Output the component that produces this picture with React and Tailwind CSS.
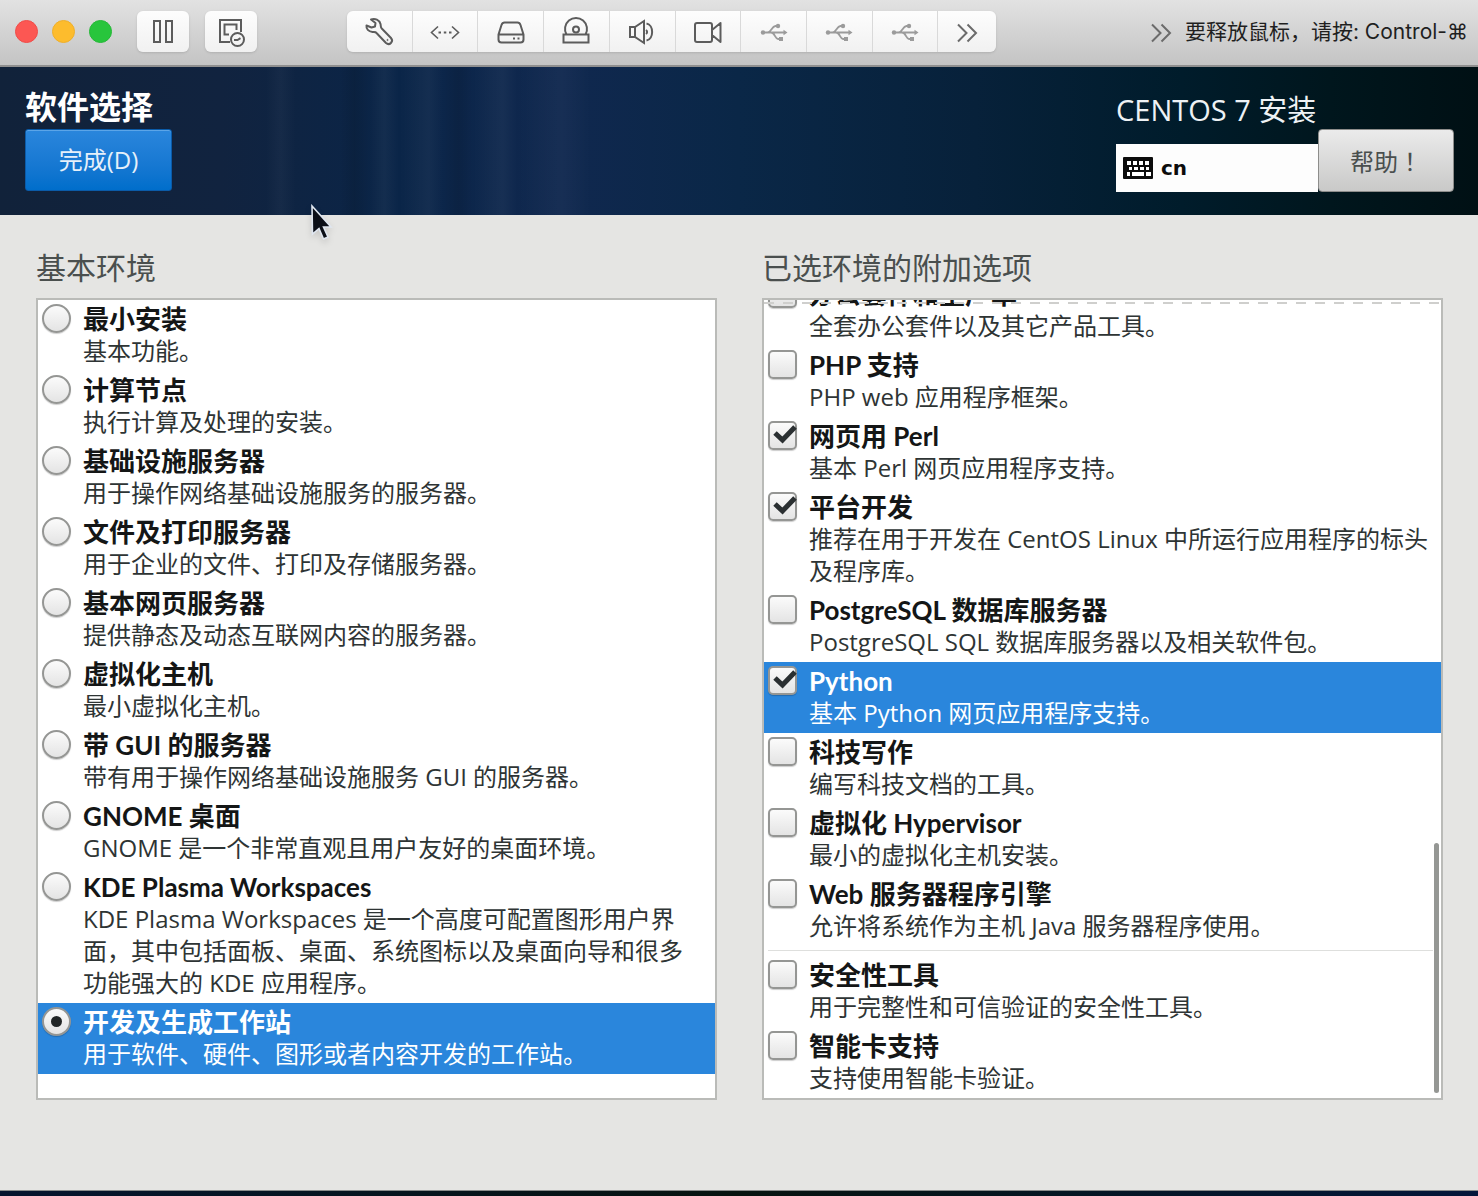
import React, { useState } from 'react';

const ENVIRONMENTS = [
    { id: 'minimal', title: '最小安装', desc: '基本功能。' },
    { id: 'compute', title: '计算节点', desc: '执行计算及处理的安装。' },
    { id: 'infra', title: '基础设施服务器', desc: '用于操作网络基础设施服务的服务器。' },
    { id: 'fileprint', title: '文件及打印服务器', desc: '用于企业的文件、打印及存储服务器。' },
    { id: 'web', title: '基本网页服务器', desc: '提供静态及动态互联网内容的服务器。' },
    { id: 'virt', title: '虚拟化主机', desc: '最小虚拟化主机。' },
    { id: 'gui', title: '带 GUI 的服务器', desc: '带有用于操作网络基础设施服务 GUI 的服务器。' },
    { id: 'gnome', title: 'GNOME 桌面', desc: 'GNOME 是一个非常直观且用户友好的桌面环境。' },
    {
        id: 'kde',
        title: 'KDE Plasma Workspaces',
        desc: 'KDE Plasma Workspaces 是一个高度可配置图形用户界面，其中包括面板、桌面、系统图标以及桌面向导和很多功能强大的 KDE 应用程序。',
    },
    { id: 'dev', title: '开发及生成工作站', desc: '用于软件、硬件、图形或者内容开发的工作站。' },
];

const ADDONS = [
    { id: 'office', title: '办公套件和生产率', desc: '全套办公套件以及其它产品工具。' },
    { id: 'php', title: 'PHP 支持', desc: 'PHP web 应用程序框架。' },
    { id: 'perl', title: '网页用 Perl', desc: '基本 Perl 网页应用程序支持。' },
    { id: 'platform', title: '平台开发', desc: '推荐在用于开发在 CentOS Linux 中所运行应用程序的标头及程序库。' },
    { id: 'postgres', title: 'PostgreSQL 数据库服务器', desc: 'PostgreSQL SQL 数据库服务器以及相关软件包。' },
    { id: 'python', title: 'Python', desc: '基本 Python 网页应用程序支持。' },
    { id: 'tex', title: '科技写作', desc: '编写科技文档的工具。' },
    { id: 'hypervisor', title: '虚拟化 Hypervisor', desc: '最小的虚拟化主机安装。' },
    { id: 'servlet', title: 'Web 服务器程序引擎', desc: '允许将系统作为主机 Java 服务器程序使用。' },
];

const COMMON_ADDONS = [
    { id: 'security', title: '安全性工具', desc: '用于完整性和可信验证的安全性工具。' },
    { id: 'smartcard', title: '智能卡支持', desc: '支持使用智能卡验证。' },
];

const Icon = ({ children, className = 'text-[#5c5c5c]' }) => (
    <svg
        viewBox="0 0 32 32"
        className={`w-8 h-8 ${className}`}
        fill="none"
        stroke="currentColor"
        strokeWidth="2"
        aria-hidden="true"
    >
        {children}
    </svg>
);

const PauseIcon = () => (
    <Icon>
        <path d="M7 5h6v21H7zM19 5h6v21h-6z" />
    </Icon>
);

const SnapshotIcon = () => (
    <Icon>
        <path d="M15 26H5V4h21v12" />
        <path d="M14 18.500H9.500V8.500h12V14" />
        <circle cx="22.500" cy="23.500" r="6.500" />
        <path d="M19 24h3.500l3-1.800" />
    </Icon>
);

const WrenchIcon = () => (
    <Icon>
        <path
            strokeLinejoin="round"
            d="M8 3.500c4-1.500 8.500.5 9.500 4.500.4 1.700 0 3 1 4.200l9.500 9.800c3 3.500-1.500 8-5 5L13.500 17c-1-1.200-2.500-.7-4-1C5.500 15.500 3 13 3.500 9.500L8.500 11.500 12 10.500l.5-3.500z"
        />
        <circle cx="24.500" cy="24" r=".6" strokeWidth="1" />
    </Icon>
);

const NetworkIcon = () => (
    <Icon>
        <path d="M9 10.500L2.500 16.500 9 22.500M23 10.500l6.500 6-6.500 6" strokeWidth="1.6" />
        <path d="M9.500 16.500h2.500M14.800 16.500h2.500M20 16.500h2.500" />
    </Icon>
);

const DiskIcon = () => (
    <Icon>
        <path
            strokeLinejoin="round"
            d="M9.500 6.500h13c1.700 0 2.500 1 3 2.500l3 9.500v5c0 2-1 3-3 3h-19c-2 0-3-1-3-3v-5l3-9.500c.5-1.500 1.300-2.500 3-2.500zM3.500 18.500h25"
        />
        <path d="M18 22.500h2M22.500 22.500h2" />
    </Icon>
);

const OpticalIcon = () => (
    <Icon>
        <path d="M6.500 18.500a11 11 0 1 1 19 0M3.500 18.500h25v8h-25z" />
        <circle cx="16" cy="13.500" r="3" />
    </Icon>
);

const SoundIcon = () => (
    <Icon>
        <path d="M4 11h5l9-6v22l-9-6H4zM9 11v10" />
        <path d="M20.500 7.500c7.500 1.500 7.500 15.500 0 17M20 14c1.500 1 1.500 3 0 4" />
    </Icon>
);

const CameraIcon = () => (
    <Icon>
        <path
            d="M5 7h13c1.200 0 2 .8 2 2v5l8.500-7v19L20 19v5c0 1.200-.8 2-2 2H5c-1.200 0-2-.8-2-2V9c0-1.200.8-2 2-2zM20 14v5"
            strokeLinejoin="round"
        />
    </Icon>
);

const UsbIcon = () => (
    <Icon className="text-[#9b9b9b]">
        <path d="M5 16.500h22M9.500 16.500c4 0 4-6 8-6.500h2M13 16.500c4 0 4 6.500 7 6.500h2" strokeWidth="1.8" />
        <circle cx="5" cy="16.500" r="2.200" fill="currentColor" stroke="none" />
        <circle cx="20" cy="10" r="2.200" fill="currentColor" stroke="none" />
        <path d="M21 21h4v4h-4zM25.500 13.800l4 2.700-4 2.700z" fill="currentColor" stroke="none" />
    </Icon>
);

const ChevronsIcon = () => (
    <Icon className="text-[#6b6b6b]">
        <path d="M7 8.500l8.500 8.500L7 25.500M16.500 8.500l8.500 8.500-8.500 8.500" />
    </Icon>
);

const KeyboardIcon = () => (
    <svg viewBox="0 0 30 22" className="w-[30px] h-[22px]" aria-hidden="true">
        <rect width="30" height="22" rx="1" fill="#0c0c0c" />
        <path
            d="M4 4h4v4H4zM10 4h4v4h-4zM16 4h4v4h-4zM22 4h4v4h-4zM6 10h3v3H6zM11 10h4v3h-4zM17 10h4v3h-4zM23 10h3v3h-3zM4 15h3v4H4zM9 15h12v4H9zM23 15h5v4h-5z"
            fill="#fff"
        />
    </svg>
);

const DEVICES = [
    { label: '设置', icon: WrenchIcon },
    { label: '网络适配器', icon: NetworkIcon },
    { label: '硬盘', icon: DiskIcon },
    { label: 'CD/DVD', icon: OpticalIcon },
    { label: '声卡', icon: SoundIcon },
    { label: '摄像头', icon: CameraIcon },
    { label: 'USB 1', icon: UsbIcon },
    { label: 'USB 2', icon: UsbIcon },
    { label: 'USB 3', icon: UsbIcon },
    { label: '更多', icon: ChevronsIcon },
];

const TOOL_BUTTON =
    'flex items-center justify-center h-[41px] bg-linear-to-b from-[#fdfdfd] to-[#f1f1f1]';

const TitleBar = () => (
    <div className="flex items-center shrink-0 h-[67px] pb-[2px] pl-[15px] pr-[10px] bg-linear-to-b from-[#e2e2e2] to-[#c4c4c4] border-b-2 border-[#8f8f8f]">
        <div className="flex gap-[14px]">
            <button aria-label="关闭" className="w-[23px] h-[23px] rounded-full bg-[#fc5753] border border-[#f04c48]" />
            <button aria-label="最小化" className="w-[23px] h-[23px] rounded-full bg-[#fdbc2d] border border-[#efaf2a]" />
            <button aria-label="缩放" className="w-[23px] h-[23px] rounded-full bg-[#28c53c] border border-[#25b937]" />
        </div>
        <button aria-label="暂停" className={`${TOOL_BUTTON} w-[52px] ml-[25px] rounded-md shadow-sm`}>
            <PauseIcon />
        </button>
        <button aria-label="快照" className={`${TOOL_BUTTON} w-[52px] ml-4 rounded-md shadow-sm`}>
            <SnapshotIcon />
        </button>
        <div className="flex w-[649px] ml-[90px] rounded-md shadow-sm overflow-hidden divide-x divide-[#d9d9d9]">
            {DEVICES.map(({ label, icon: DeviceIcon }) => (
                <button key={label} aria-label={label} className={`${TOOL_BUTTON} grow basis-[66px] last:grow-0 last:basis-[58px]`}>
                    <DeviceIcon />
                </button>
            ))}
        </div>
        <div className="flex items-center gap-2 ml-auto whitespace-nowrap text-[21px] text-[#1f1f1f] font-['Inter','Noto_Sans_CJK_SC','DejaVu_Sans',sans-serif]">
            <ChevronsIcon />
            <span>要释放鼠标，请按: Control-⌘</span>
        </div>
    </div>
);

const Header = () => (
    <header className="flex justify-between shrink-0 h-[148px] pl-[25px] pr-6 pt-[21px] bg-[linear-gradient(90deg,transparent_18%,#ffffff08_19%,transparent_20%,transparent_23%,#0000001a_24%,transparent_25%,#ffffff0a_26%,transparent_27%,#ffffff0a_29%,transparent_30%,#0000001a_31%,transparent_32%,#ffffff0a_34%,transparent_35%,#ffffff08_38%,transparent_40%),linear-gradient(90deg,#11223a_0%,#11233f_15%,#0a2548_27%,#10284f_38%,#0a2747_50%,#07213a_66%,#001c2b_80%,#00161d_90%,#001014_100%)]">
        <div className="flex flex-col items-start">
            <h1 className="h-[41px] leading-[38px] text-[32px] font-bold text-white">软件选择</h1>
            <button className="w-[147px] h-[62px] rounded-[3px] border border-[#0b5ba8] bg-linear-to-b from-[#2a86dc] to-[#006ecb] text-2xl text-[#e6f0fa] shadow-[inset_0_1px_0_#5ba5e8]">
                完成(D)
            </button>
        </div>
        <div className="flex items-end pb-[23px]">
            <div className="flex flex-col w-[202px]">
                <h2 className="h-10 mb-[14px] leading-10 text-[29px] whitespace-nowrap text-[#eef2f5]">CENTOS 7 安装</h2>
                <button className="flex items-center gap-2 h-12 px-[7px] bg-[#fdfdfd] text-xl font-bold text-[#0c0c0c] font-['DejaVu_Sans',sans-serif]">
                    <KeyboardIcon />
                    cn
                </button>
            </div>
            <button className="w-[136px] h-[63px] rounded-[4px] border border-[#8d8d8b] bg-linear-to-b from-[#ebebeb] to-[#c9c9c8] text-2xl text-[#4a4f4e] font-['Noto_Sans_CJK_TC',sans-serif]">
                帮助！
            </button>
        </div>
    </header>
);

const OptionRow = ({ type, name, option, checked, active, onChange }) => (
    <label
        className={`flex gap-3 shrink-0 pl-1 pt-[3px] pb-1 ${active ? 'bg-[#2a86dc] text-white' : 'text-[#2e3434]'}`}
    >
        <span className="relative shrink-0 w-[29px] h-[29px] mt-px">
            <input
                type={type}
                name={name}
                checked={checked}
                onChange={onChange}
                className={`peer block appearance-none w-[29px] h-[29px] border-2 border-[#959694] bg-linear-to-b from-[#fbfbfb] to-[#e4e4e4] shadow-[0_1px_1px_#0003] ${
                    type === 'radio' ? 'rounded-full' : 'rounded-[5px]'
                }`}
            />
            {type === 'radio' ? (
                <span className="hidden peer-checked:block absolute inset-[9px] rounded-full bg-[#222627]" />
            ) : (
                <svg
                    viewBox="0 0 29 29"
                    className="hidden peer-checked:block absolute inset-0 pointer-events-none"
                    fill="none"
                    stroke="#2b3032"
                    strokeWidth="5"
                    aria-hidden="true"
                >
                    <path d="M7 12l7.500 7L27 6" />
                </svg>
            )}
        </span>
        <span className="flex-1">
            <span
                className={`block text-[26px] leading-8 font-bold font-['Lato','Noto_Sans_CJK_SC',sans-serif] ${
                    active ? 'text-white' : 'text-[#141616]'
                }`}
            >
                {option.title}
            </span>
            <span className="block pr-3 text-2xl leading-8">{option.desc}</span>
        </span>
    </label>
);

const EnvironmentPanel = ({ value, onChange }) => (
    <section className="flex flex-col min-h-0">
        <h3 id="env-title" className="h-[50px] leading-10 text-[30px] text-[#4a4f4e]">基本环境</h3>
        <div
            role="radiogroup"
            aria-labelledby="env-title"
            className="flex-1 min-h-0 overflow-hidden border-2 border-[#babbb8] bg-white"
        >
            {ENVIRONMENTS.map((env) => (
                <OptionRow
                    key={env.id}
                    type="radio"
                    name="environment"
                    option={env}
                    checked={value === env.id}
                    active={value === env.id}
                    onChange={() => onChange(env.id)}
                />
            ))}
        </div>
    </section>
);

const AddonPanel = ({ selected, current, onToggle }) => {
    const renderRow = (addon) => (
        <OptionRow
            key={addon.id}
            type="checkbox"
            name={addon.id}
            option={addon}
            checked={selected.includes(addon.id)}
            active={current === addon.id}
            onChange={() => onToggle(addon.id)}
        />
    );

    return (
        <section className="flex flex-col min-h-0">
            <h3 className="h-[50px] leading-10 text-[30px] text-[#4a4f4e]">已选环境的附加选项</h3>
            {/* list is scrolled to its end, so the rows sit on the bottom edge */}
            <div className="relative flex flex-col justify-end flex-1 min-h-0 overflow-hidden border-2 border-[#babbb8] bg-white">
                {ADDONS.map(renderRow)}
                <hr className="shrink-0 mt-1 mb-[5px] ml-1 mr-2 border-[#dedfdd]" />
                {COMMON_ADDONS.map(renderRow)}
                <div className="absolute top-[2px] inset-x-0 h-[2px] bg-[repeating-linear-gradient(90deg,#cfcfcd_0_10px,transparent_10px_19px)]" />
                <div className="absolute right-[2px] bottom-[5px] w-[5px] h-[250px] rounded-full bg-[#959794]" />
            </div>
        </section>
    );
};

const Cursor = () => (
    <svg
        viewBox="0 0 24 40"
        className="absolute left-[310px] top-[204px] w-6 h-10 pointer-events-none drop-shadow-md"
        aria-hidden="true"
    >
        <path
            d="M2 2l.5 28 6.500-5.500 4.500 10.500 4.500-2-4.500-10H21z"
            fill="#0b0f18"
            stroke="#dfe6f0"
            strokeWidth="1.6"
        />
    </svg>
);

export default function App() {
    const [environment, setEnvironment] = useState('dev');
    const [selected, setSelected] = useState(['perl', 'platform', 'python']);
    const [current, setCurrent] = useState('python');

    const toggleAddon = (id) => {
        setCurrent(id);
        setSelected((prev) => (prev.includes(id) ? prev.filter((x) => x !== id) : [...prev, id]));
    };

    return (
        <div className="relative flex flex-col h-screen overflow-hidden bg-[#e5e5e3] font-['Open_Sans','Noto_Sans_CJK_SC',sans-serif]">
            <TitleBar />
            <Header />
            <main className="grid grid-cols-2 grid-rows-1 gap-[45px] flex-1 min-h-0 pl-9 pr-[35px] pt-[33px] pb-[90px]">
                <EnvironmentPanel value={environment} onChange={setEnvironment} />
                <AddonPanel selected={selected} current={current} onToggle={toggleAddon} />
            </main>
            <footer className="shrink-0 h-[6px] border-t border-[#8a8c8b] bg-linear-to-r from-[#06142e] via-[#07130f] to-[#04163a]" />
            <Cursor />
        </div>
    );
}
